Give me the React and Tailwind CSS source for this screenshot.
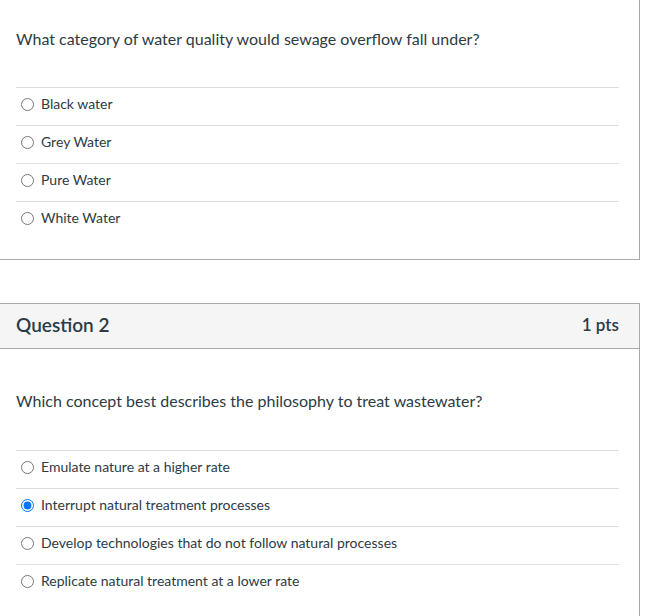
const q1 = ["Black water", "Grey Water", "Pure Water", "White Water"];
const q2 = [
  "Emulate nature at a higher rate",
  "Interrupt natural treatment processes",
  "Develop technologies that do not follow natural processes",
  "Replicate natural treatment at a lower rate",
];

function Answer({ name, label, checked }) {
  return (
    <label className="flex items-center h-[38px] pb-[5px] border-t border-[#dddddd] text-[14px] leading-5 text-[#2d3b45]">
      <input
        type="radio"
        name={name}
        defaultChecked={checked}
        className="w-[13px] h-[13px] ml-[5px] mr-[7px] my-0"
      />
      <span>{label}</span>
    </label>
  );
}

export default function App() {
  return (
    <div className="min-h-screen bg-white font-['Lato','Noto_Sans',sans-serif] text-[#2d3b45]">
      <div className="w-[640px] border-r border-b border-[#aaaaaa] pt-[27px] pb-5 pl-4 pr-5">
        <p className="text-base leading-6">What category of water quality would sewage overflow fall under?</p>
        <div className="mt-[36px]">
          {q1.map((a) => (
            <Answer key={a} name="q1" label={a} />
          ))}
        </div>
      </div>

      <div className="w-[640px] mt-[43px] border-t border-r border-[#aaaaaa]">
        <div className="h-[45px] flex items-center justify-between bg-[#f5f5f5] border-b border-[#aaaaaa] pl-4 pr-5 pb-[2px]">
          <h2 className="text-[19px] font-semibold leading-6">Question 2</h2>
          <span className="text-[17px] font-semibold leading-6">1 pts</span>
        </div>
        <div className="pt-[40px] pb-5 pl-4 pr-5">
          <p className="text-base leading-6">Which concept best describes the philosophy to treat wastewater?</p>
          <div className="mt-[37px]">
            {q2.map((a, i) => (
              <Answer key={a} name="q2" label={a} checked={i === 1} />
            ))}
          </div>
        </div>
      </div>
    </div>
  );
}
